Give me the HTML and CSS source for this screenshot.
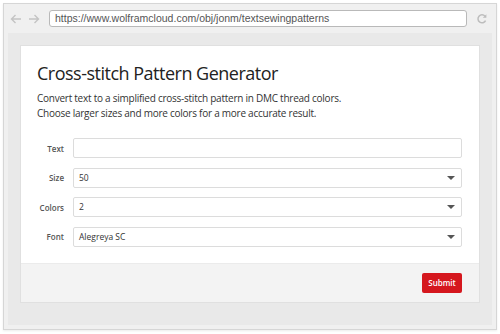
FILE: index.html
```html
<!DOCTYPE html>
<html>
<head>
<meta charset="utf-8">
<link rel="stylesheet" href="styles.css">
</head>
<body>
<div class="window">
  <div class="toolbar">
    <div class="nav">
      <svg width="12" height="10" viewBox="0 0 12 10"><path d="M11 5H1.5M5.5 1L1.5 5l4 4" fill="none" stroke="#c4c4c4" stroke-width="1.4"/></svg>
      <svg width="12" height="10" viewBox="0 0 12 10"><path d="M1 5h9.5M6.5 1l4 4-4 4" fill="none" stroke="#c4c4c4" stroke-width="1.4"/></svg>
    </div>
    <div class="url">https://www.wolframcloud.com/obj/jonm/textsewingpatterns</div>
    <svg class="reload" width="12" height="12" viewBox="0 0 12 12"><path d="M9.6 7.6A4 4 0 1 1 9 3.2" fill="none" stroke="#bdbdbd" stroke-width="1.5"/><path d="M10.4 1.2v3.6H6.8z" fill="#bdbdbd"/></svg>
  </div>
  <div class="content">
    <div class="card">
      <div class="card-body">
        <h1 class="title">Cross-stitch Pattern Generator</h1>
        <p class="desc">Convert text to a simplified cross-stitch pattern in DMC thread colors.<br>Choose larger sizes and more colors for a more accurate result.</p>
        <div class="form">
          <label class="label">Text</label>
          <div class="field"></div>
          <label class="label">Size</label>
          <div class="field select">50<span class="caret"></span></div>
          <label class="label">Colors</label>
          <div class="field select">2<span class="caret"></span></div>
          <label class="label">Font</label>
          <div class="field select">Alegreya SC<span class="caret"></span></div>
        </div>
      </div>
      <div class="card-footer">
        <button class="submit">Submit</button>
      </div>
    </div>
  </div>
</div>
</body>
</html>
```

FILE: styles.css
```css
html, body {
  margin: 0;
  padding: 0;
  background: #ffffff;
}
body {
  width: 500px;
  height: 334px;
  overflow: hidden;
}
.window {
  margin: 3px 0 0 3px;
  width: 494px;
  height: 327px;
  border: 1px solid #d6d6d6;
  background: #f0f0f0;
  display: flex;
  flex-direction: column;
  box-sizing: border-box;
  padding: 0 4px 4px 4px;
  box-shadow: 0 1px 2px rgba(0,0,0,0.08);
}
.toolbar {
  height: 29px;
  display: flex;
  align-items: center;
  flex-shrink: 0;
}
.nav {
  display: flex;
  gap: 6px;
  width: 41px;
  padding-left: 2px;
  box-sizing: border-box;
}
.url {
  width: 418px;
  height: 17px;
  box-sizing: border-box;
  border: 1px solid #b9b9b9;
  border-radius: 3px;
  background: #fff;
  font-family: "Liberation Sans", Arial, sans-serif;
  font-size: 10.5px;
  line-height: 15px;
  color: #555;
  padding-left: 5px;
  white-space: nowrap;
  overflow: hidden;
}
.reload {
  margin-left: 9px;
}
.content {
  flex: 1;
  background: #e9e9e9;
  padding: 12px 12px 22px 12px;
}
.card {
  background: #fff;
  border: 1px solid #e0e0e0;
  height: 258px;
  box-sizing: border-box;
  display: flex;
  flex-direction: column;
  font-family: "Open Sans", "Noto Sans", sans-serif;
}
.card-body {
  padding: 15px 17px 16px 16px;
}
.title {
  margin: 0;
  font-weight: 400;
  font-size: 18px;
  line-height: 24px;
  color: #222;
  letter-spacing: -0.5px;
}
.desc {
  margin: 6px 0 0 0;
  font-size: 10px;
  line-height: 15px;
  color: #333;
  letter-spacing: -0.25px;
}
.form {
  margin-top: 17px;
  display: grid;
  grid-template-columns: 27px 1fr;
  column-gap: 9px;
  row-gap: 9.5px;
  align-items: center;
}
.label {
  text-align: right;
  font-size: 8px;
  font-weight: 600;
  color: #555;
}
.field {
  height: 20px;
  box-sizing: border-box;
  border: 1px solid #dcdcdc;
  border-radius: 2px;
  background: #fff;
  font-size: 8.5px;
  line-height: 18px;
  color: #333;
  padding-left: 5px;
  position: relative;
}
.caret {
  position: absolute;
  right: 6px;
  top: 7px;
  width: 0;
  height: 0;
  border-left: 4px solid transparent;
  border-right: 4px solid transparent;
  border-top: 4px solid #555;
}
.card-footer {
  flex: 1;
  background: #f3f3f3;
  border-top: 1px solid #ebebeb;
  display: flex;
  justify-content: flex-end;
  align-items: center;
  padding-right: 17px;
}
.submit {
  width: 40px;
  height: 20px;
  border: none;
  border-radius: 2px;
  background: #d5171e;
  color: #fff;
  font-family: "Open Sans", "Noto Sans", sans-serif;
  font-size: 8px;
  font-weight: 600;
  padding: 0;
}
```
